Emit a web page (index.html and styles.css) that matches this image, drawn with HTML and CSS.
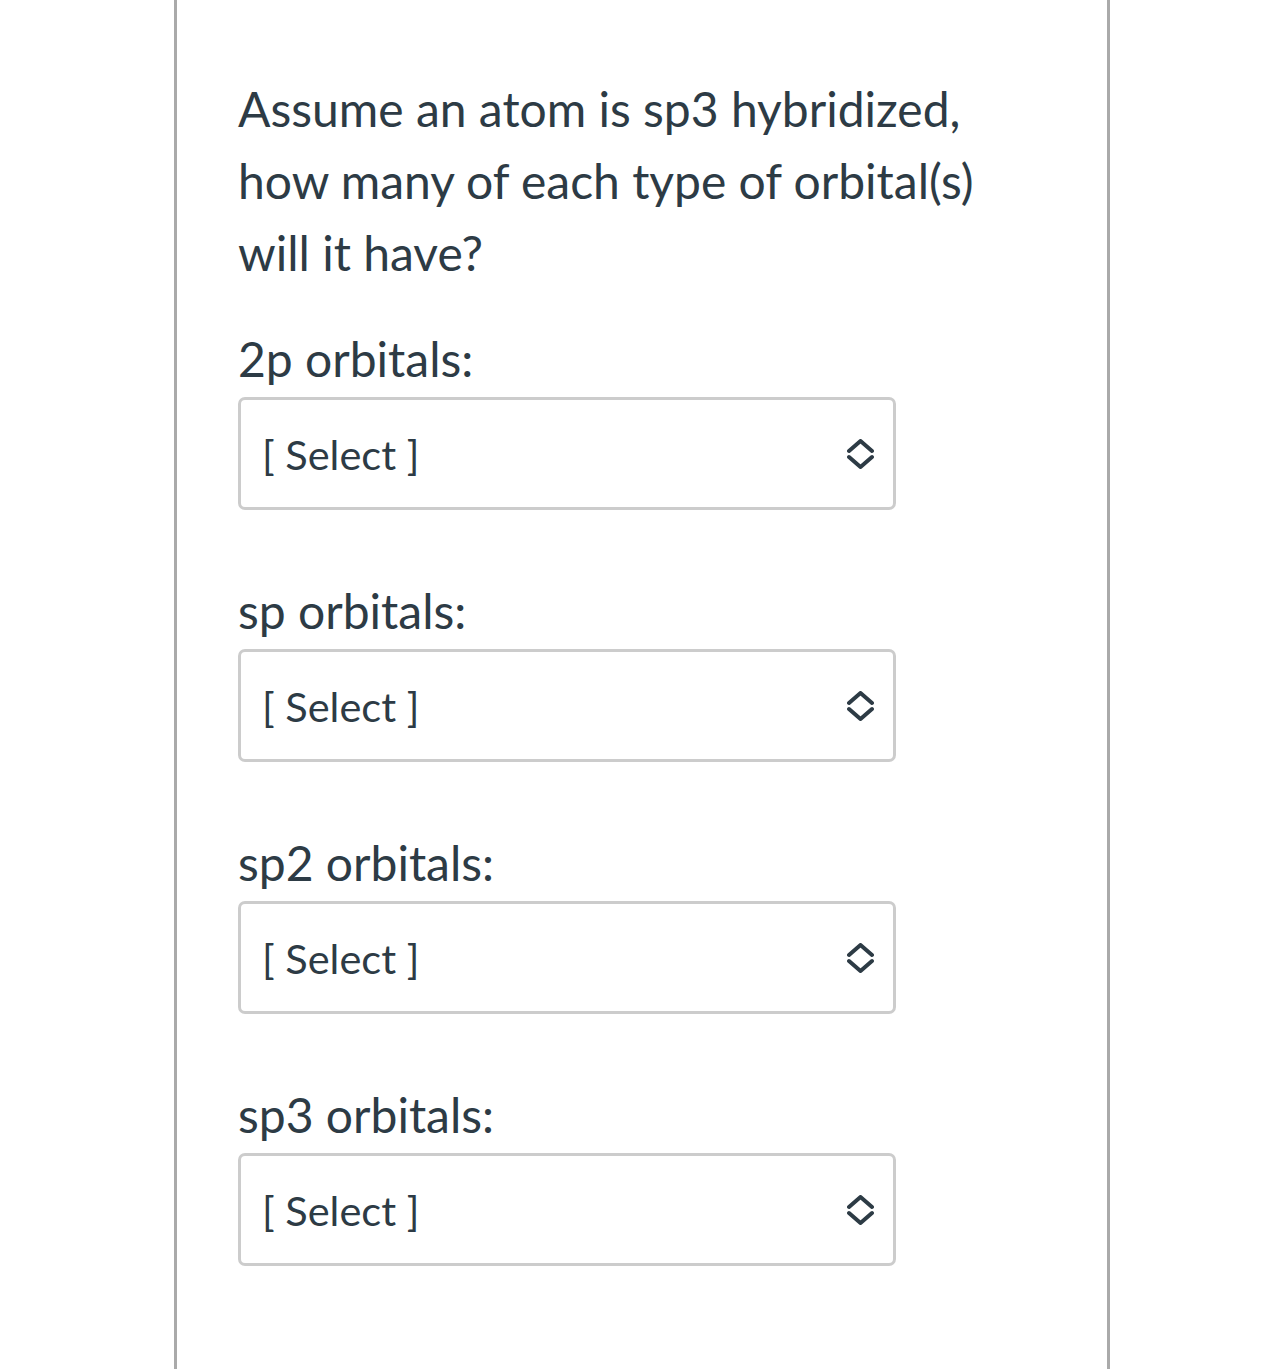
FILE: index.html
```html
<!DOCTYPE html>
<html>
<head>
	<meta charset="utf-8">
	<meta name="viewport" content="width=device-width,initial-scale=1.0">
	<title>Question</title>

	<link rel="stylesheet" href="styles.css">

</head>
<body>

	<!------------------------------------>
	<!---------- QUESTION PANEL ---------->
	<!------------------------------------>
	<section class="panel">
		<p class="question">Assume an atom is sp3 hybridized, how many of each type of orbital(s) will it have?</p>

		<!-- 2P -->
		<section class="field">
			<p class="label">2p orbitals:</p>
			<section class="select">
				<span class="select-text">[ Select ]</span>
				<svg class="chev" viewBox="0 0 27 30"><path d="M2 12 L13.5 2 L25 12 M2 18 L13.5 28 L25 18"/></svg>
			</section>
		</section>

		<!-- SP -->
		<section class="field">
			<p class="label">sp orbitals:</p>
			<section class="select">
				<span class="select-text">[ Select ]</span>
				<svg class="chev" viewBox="0 0 27 30"><path d="M2 12 L13.5 2 L25 12 M2 18 L13.5 28 L25 18"/></svg>
			</section>
		</section>

		<!-- SP2 -->
		<section class="field">
			<p class="label">sp2 orbitals:</p>
			<section class="select">
				<span class="select-text">[ Select ]</span>
				<svg class="chev" viewBox="0 0 27 30"><path d="M2 12 L13.5 2 L25 12 M2 18 L13.5 28 L25 18"/></svg>
			</section>
		</section>

		<!-- SP3 -->
		<section class="field">
			<p class="label">sp3 orbitals:</p>
			<section class="select">
				<span class="select-text">[ Select ]</span>
				<svg class="chev" viewBox="0 0 27 30"><path d="M2 12 L13.5 2 L25 12 M2 18 L13.5 28 L25 18"/></svg>
			</section>
		</section>
	</section>

</body>
</html>
```

FILE: styles.css
```css
body {
	padding:0;
	margin:0;
	background:#fff;
	font-family: Lato, "Noto Sans", sans-serif;
	color:#2d3b45;
}

div, figure, section, p, svg {
	padding:0; margin:0; box-sizing: border-box;
}

.panel {
	margin-left:174px;
	width:936px;
	min-height:100vh;
	border-left:3px solid #aaaaaa;
	border-right:3px solid #aaaaaa;
	padding:73px 0 60px 61px;
}

.question {
	font-size:48px;
	line-height:72px;
	width:780px;
}

.field {
	display:flex;
	flex-direction:column;
}

.label {
	font-size:48px;
	line-height:72px;
	margin-top:34px;
}

.field:not(:first-of-type) .label {
	margin-top:65px;
}

.select {
	width:658px;
	height:113px;
	margin-top:2px;
	border:3px solid #cccccc;
	border-radius:7px;
	display:flex;
	align-items:center;
	justify-content:space-between;
	padding:0 19px 0 21px;
}

.select-text {
	font-size:41.5px;
}

.chev {
	width:27px;
	height:30px;
	fill:none;
	stroke:#2d3b45;
	stroke-width:4;
	stroke-linecap:round;
	stroke-linejoin:round;
}
```
